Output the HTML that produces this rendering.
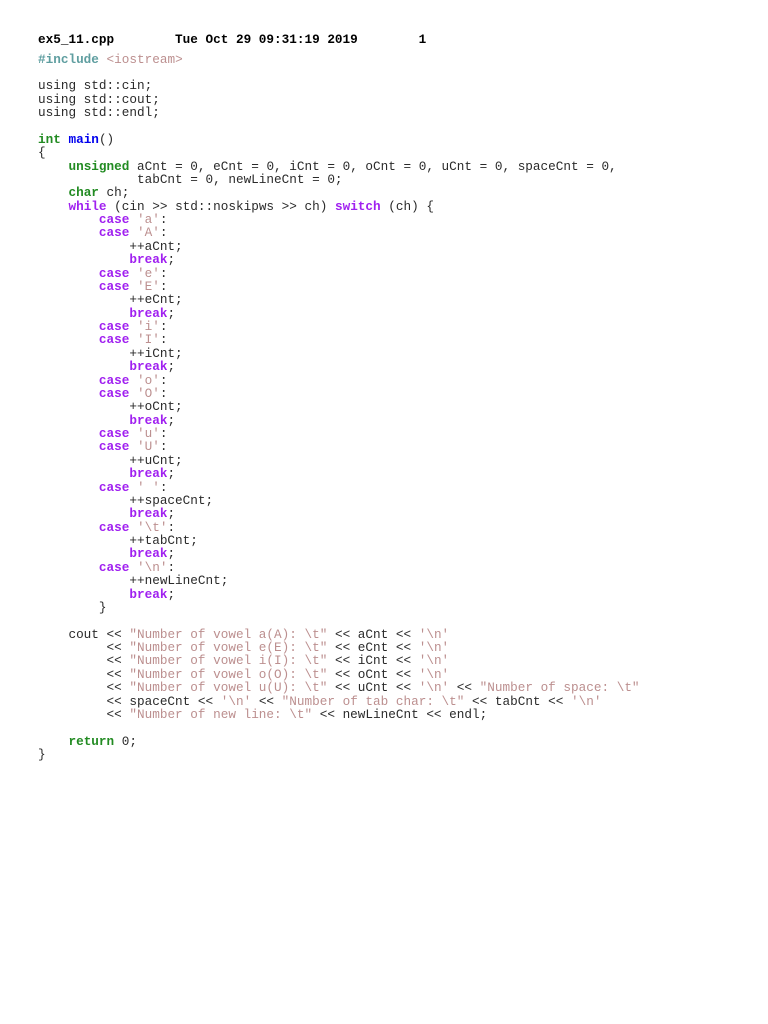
<!DOCTYPE html>
<html><head><meta charset="utf-8"><style>
html,body{margin:0;padding:0;background:#fff;width:768px;height:1024px;overflow:hidden}
pre{position:absolute;left:38px;margin:0;font-family:"Liberation Mono",monospace;font-size:12.7px;line-height:13.37px;color:#2a2a2a}
#hdr{top:33px;font-weight:bold;color:#000}
#code{top:52.5px}
.k{color:#a020f0;font-weight:bold}
.t{color:#228b22;font-weight:bold}
.f{color:#0000ee;font-weight:bold}
.s{color:#bc8f8f}
.p{color:#5f9ea0;font-weight:bold}
</style></head><body>
<pre id="hdr">ex5_11.cpp        Tue Oct 29 09:31:19 2019        1</pre>
<pre id="code"><span class="p">#include</span> <span class="s">&lt;iostream&gt;</span>

using std::cin;
using std::cout;
using std::endl;

<span class="t">int</span> <span class="f">main</span>()
{
    <span class="t">unsigned</span> aCnt = 0, eCnt = 0, iCnt = 0, oCnt = 0, uCnt = 0, spaceCnt = 0,
             tabCnt = 0, newLineCnt = 0;
    <span class="t">char</span> ch;
    <span class="k">while</span> (cin &gt;&gt; std::noskipws &gt;&gt; ch) <span class="k">switch</span> (ch) {
        <span class="k">case</span> <span class="s">'a'</span>:
        <span class="k">case</span> <span class="s">'A'</span>:
            ++aCnt;
            <span class="k">break</span>;
        <span class="k">case</span> <span class="s">'e'</span>:
        <span class="k">case</span> <span class="s">'E'</span>:
            ++eCnt;
            <span class="k">break</span>;
        <span class="k">case</span> <span class="s">'i'</span>:
        <span class="k">case</span> <span class="s">'I'</span>:
            ++iCnt;
            <span class="k">break</span>;
        <span class="k">case</span> <span class="s">'o'</span>:
        <span class="k">case</span> <span class="s">'O'</span>:
            ++oCnt;
            <span class="k">break</span>;
        <span class="k">case</span> <span class="s">'u'</span>:
        <span class="k">case</span> <span class="s">'U'</span>:
            ++uCnt;
            <span class="k">break</span>;
        <span class="k">case</span> <span class="s">' '</span>:
            ++spaceCnt;
            <span class="k">break</span>;
        <span class="k">case</span> <span class="s">'\t'</span>:
            ++tabCnt;
            <span class="k">break</span>;
        <span class="k">case</span> <span class="s">'\n'</span>:
            ++newLineCnt;
            <span class="k">break</span>;
        }

    cout &lt;&lt; <span class="s">"Number of vowel a(A): \t"</span> &lt;&lt; aCnt &lt;&lt; <span class="s">'\n'</span>
         &lt;&lt; <span class="s">"Number of vowel e(E): \t"</span> &lt;&lt; eCnt &lt;&lt; <span class="s">'\n'</span>
         &lt;&lt; <span class="s">"Number of vowel i(I): \t"</span> &lt;&lt; iCnt &lt;&lt; <span class="s">'\n'</span>
         &lt;&lt; <span class="s">"Number of vowel o(O): \t"</span> &lt;&lt; oCnt &lt;&lt; <span class="s">'\n'</span>
         &lt;&lt; <span class="s">"Number of vowel u(U): \t"</span> &lt;&lt; uCnt &lt;&lt; <span class="s">'\n'</span> &lt;&lt; <span class="s">"Number of space: \t"</span>
         &lt;&lt; spaceCnt &lt;&lt; <span class="s">'\n'</span> &lt;&lt; <span class="s">"Number of tab char: \t"</span> &lt;&lt; tabCnt &lt;&lt; <span class="s">'\n'</span>
         &lt;&lt; <span class="s">"Number of new line: \t"</span> &lt;&lt; newLineCnt &lt;&lt; endl;

    <span class="t">return</span> 0;
}</pre>
</body></html>
